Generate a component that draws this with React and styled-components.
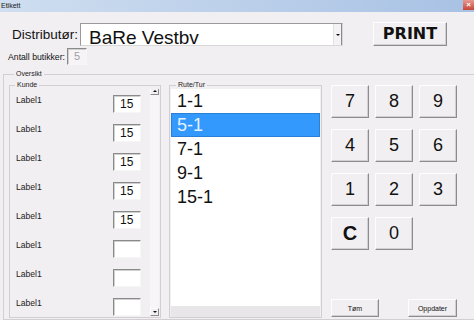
import React from 'react';
import styled, { createGlobalStyle } from 'styled-components';

const GlobalStyle = createGlobalStyle`
  html, body {
    margin: 0;
    padding: 0;
    background: #f2eff2;
  }
  body {
    width: 474px;
    height: 320px;
    overflow: hidden;
    font-family: "Liberation Sans", Arial, sans-serif;
    color: #111;
  }
`;

const Window = styled.div`
  width: 474px;
  height: 320px;
  display: flex;
  flex-direction: column;
  background: #f2eff2;
  overflow: hidden;
`;

const TitleBar = styled.div`
  height: 12px;
  flex: none;
  display: flex;
  justify-content: space-between;
  background: linear-gradient(to right, #cfdef0, #b8cde9 60%, #a8c2e4);
  font-size: 7px;
  line-height: 12px;
  color: #222;
  padding-left: 1px;
`;

const CloseBox = styled.div`
  width: 11px;
  height: 10px;
  background: linear-gradient(#e79a90, #c8463a);
  color: #fff;
  font-size: 8px;
  line-height: 10px;
  text-align: center;
  font-weight: bold;
`;

const TopRow = styled.div`
  display: flex;
  align-items: flex-start;
  flex: none;
  height: 24px;
  margin-top: 10px;
  padding-left: 12px;
`;

const BigLabel = styled.div`
  width: 68px;
  font-size: 13.5px;
  line-height: 16px;
  margin-top: 5px;
`;

const Combo = styled.div`
  width: 263px;
  height: 23px;
  box-sizing: border-box;
  display: flex;
  background: #fff;
  border: 1px solid;
  border-color: #9a9a9a #d8d8d8 #d8d8d8 #9a9a9a;
  margin-top: 1px;
`;

const ComboText = styled.div`
  flex: 1;
  overflow: hidden;
  font-size: 19px;
  line-height: 27px;
  height: 21px;
  padding-left: 8px;
  white-space: nowrap;
`;

const ComboArrow = styled.div`
  width: 7px;
  display: flex;
  align-items: center;
  justify-content: center;
  background: #f4f2f4;
  border-left: 1px solid #e4e2e4;
  border-right: 1px solid #8a8a8a;
  &::after {
    content: '';
    border-left: 2px solid transparent;
    border-right: 2px solid transparent;
    border-top: 2px solid #111;
  }
`;

const RaisedButton = styled.button`
  box-sizing: border-box;
  padding: 0;
  margin: 0;
  background: #f1eff1;
  border: 1px solid;
  border-color: #fdfdfd #8c8c8c #8c8c8c #fdfdfd;
  box-shadow: inset -1px -1px 0 #d2d0d2;
  color: #111;
  font-family: "Liberation Sans", Arial, sans-serif;
  cursor: pointer;
`;

const PrintButton = styled(RaisedButton)`
  width: 74px;
  height: 24px;
  margin-left: 30px;
  font-family: "DejaVu Sans", Verdana, sans-serif;
  font-weight: bold;
  font-size: 16px;
  line-height: 22px;
`;

const CountRow = styled.div`
  display: flex;
  align-items: center;
  flex: none;
  margin-top: 2px;
  padding-left: 8px;
  height: 17px;
`;

const SmallLabel = styled.div`
  font-size: 8.7px;
`;

const SunkenBox = styled.div`
  box-sizing: border-box;
  background: #fff;
  border: 1px solid;
  border-color: #8a8a8a #f6f6f6 #f6f6f6 #8a8a8a;
  box-shadow: inset 1px 1px 0 #d0d0d0;
`;

const CountInput = styled(SunkenBox)`
  width: 20px;
  height: 17px;
  margin-left: 2px;
  background: #f6f4f6;
  color: #a0a0a0;
  font-size: 11px;
  line-height: 15px;
  padding-left: 6px;
`;

const Frame = styled.fieldset`
  box-sizing: border-box;
  margin: 0;
  min-width: 0;
  min-height: 0;
  border: 1px solid #d2ced2;
  padding: 0;
`;

const Legend = styled.legend`
  font-size: 7px;
  line-height: 8px;
  padding: 0 2px;
  margin-left: 5px;
  color: #222;
`;

const Overview = styled(Frame)`
  flex: 1;
  margin: 5px 0 0 3px;
  border-right: none;
  padding: 3px 0 1px 5px;
  display: flex;
  overflow: hidden;
`;

const CustomerFrame = styled(Frame)`
  width: 152px;
  display: flex;
  overflow: hidden;
`;

const RowsList = styled.div`
  flex: 1;
  min-height: 0;
  overflow: hidden;
  padding: 1px 0 0 6px;
`;

const CustomerRow = styled.div`
  display: grid;
  grid-template-columns: 97px 28px;
  height: 29px;
  align-items: start;
`;

const RowLabel = styled.div`
  font-size: 8.6px;
  line-height: 10px;
  margin-top: 5px;
  color: #222;
`;

const QtyInput = styled(SunkenBox)`
  height: 18px;
  margin-top: 5px;
  font-size: 12px;
  line-height: 16px;
  padding-left: 6px;
`;

const ScrollBar = styled.div`
  width: 9px;
  margin: -2px 1px 1px 0;
  display: flex;
  flex-direction: column;
  justify-content: space-between;
  background: #f7f6f7;
`;

const ScrollArrow = styled.div`
  height: 8px;
  box-sizing: border-box;
  display: flex;
  align-items: center;
  justify-content: center;
  background: #f1eff1;
  border: 1px solid;
  border-color: #fdfdfd #8c8c8c #8c8c8c #fdfdfd;
  &::after {
    content: '';
    border-left: 2px solid transparent;
    border-right: 2px solid transparent;
    ${p => (p.$down ? 'border-top: 2px solid #111;' : 'border-bottom: 2px solid #111;')}
  }
`;

const RouteFrame = styled(Frame)`
  width: 153px;
  margin-left: 8px;
  padding: 0 1px;
  display: flex;
  flex-direction: column;
  overflow: hidden;
`;

const RouteList = styled.div`
  flex: 1;
  min-height: 0;
  background: #fff;
  overflow: hidden;
`;

const RouteItem = styled.div`
  height: 24px;
  box-sizing: border-box;
  font-size: 18px;
  line-height: 24px;
  padding-left: 6px;
  background: ${p => (p.$selected ? '#3399fd' : 'transparent')};
  color: ${p => (p.$selected ? '#e4f1ff' : '#111')};
  box-shadow: ${p => (p.$selected ? 'inset 0 0 0 1px #2a7fd6' : 'none')};
`;

const ListFooter = styled.div`
  height: 11px;
  flex: none;
  background: #e9e6e9;
`;

const KeypadColumn = styled.div`
  width: 126px;
  margin-left: 9px;
  padding-top: 4px;
  display: flex;
  flex-direction: column;
`;

const Keypad = styled.div`
  display: grid;
  grid-template-columns: repeat(3, 38px);
  grid-auto-rows: 33px;
  column-gap: 6px;
  row-gap: 11px;
`;

const KeyButton = styled(RaisedButton)`
  font-size: ${p => (p.$bold ? '20px' : '18px')};
  font-weight: ${p => (p.$bold ? 'bold' : 'normal')};
`;

const BottomButtons = styled.div`
  margin-top: auto;
  margin-bottom: 1px;
  display: flex;
  justify-content: space-between;
`;

const SmallButton = styled(RaisedButton)`
  height: 18px;
  width: ${p => p.$w}px;
  font-size: 7px;
`;

const customers = ['15', '15', '15', '15', '15', '', '', ''];
const routes = ['1-1', '5-1', '7-1', '9-1', '15-1'];
const keys = ['7', '8', '9', '4', '5', '6', '1', '2', '3', 'C', '0'];

export default function App() {
  return (
    <Window>
      <GlobalStyle />
      <TitleBar>
        <span>Etikett</span>
        <CloseBox>×</CloseBox>
      </TitleBar>
      <TopRow>
        <BigLabel>Distributør:</BigLabel>
        <Combo>
          <ComboText>BaRe Vestbv</ComboText>
          <ComboArrow />
        </Combo>
        <PrintButton>PRINT</PrintButton>
      </TopRow>
      <CountRow>
        <SmallLabel>Antall butikker:</SmallLabel>
        <CountInput>5</CountInput>
      </CountRow>
      <Overview>
        <Legend>Oversikt</Legend>
        <CustomerFrame>
          <Legend>Kunde</Legend>
          <RowsList>
            {customers.map((v, i) => (
              <CustomerRow key={i}>
                <RowLabel>Label1</RowLabel>
                <QtyInput>{v}</QtyInput>
              </CustomerRow>
            ))}
          </RowsList>
          <ScrollBar>
            <ScrollArrow />
            <ScrollArrow $down />
          </ScrollBar>
        </CustomerFrame>
        <RouteFrame>
          <Legend>Rute/Tur</Legend>
          <RouteList>
            {routes.map(r => (
              <RouteItem key={r} $selected={r === '5-1'}>{r}</RouteItem>
            ))}
          </RouteList>
          <ListFooter />
        </RouteFrame>
        <KeypadColumn>
          <Keypad>
            {keys.map(k => (
              <KeyButton key={k} $bold={k === 'C'}>{k}</KeyButton>
            ))}
          </Keypad>
          <BottomButtons>
            <SmallButton $w={48}>Tøm</SmallButton>
            <SmallButton $w={49}>Oppdater</SmallButton>
          </BottomButtons>
        </KeypadColumn>
      </Overview>
    </Window>
  );
}
